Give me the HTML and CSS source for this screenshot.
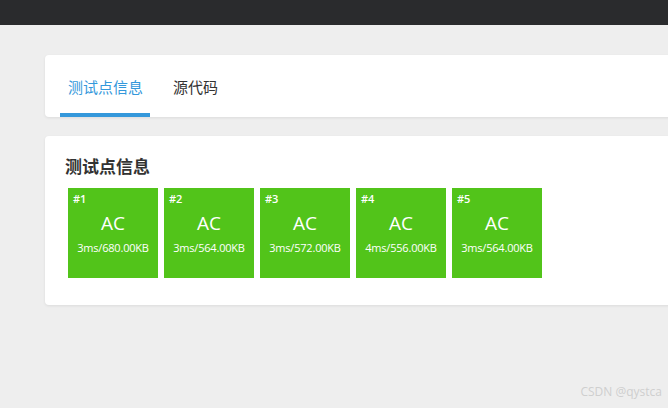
FILE: index.html
```html
<!DOCTYPE html>
<html lang="zh-CN">
<head>
<meta charset="utf-8">
<title>测试点信息</title>
<link rel="stylesheet" href="styles.css">
</head>
<body>
<header class="topbar"></header>
<main class="main">
  <section class="card tabs-card">
    <nav class="tabs">
      <a class="tab active">测试点信息</a>
      <a class="tab">源代码</a>
    </nav>
  </section>
  <section class="card cases-card">
    <h2 class="title">测试点信息</h2>
    <div class="cases">
      <div class="case"><div class="num">#1</div><div class="status">AC</div><div class="stat">3ms/680.00KB</div></div>
      <div class="case"><div class="num">#2</div><div class="status">AC</div><div class="stat">3ms/564.00KB</div></div>
      <div class="case"><div class="num">#3</div><div class="status">AC</div><div class="stat">3ms/572.00KB</div></div>
      <div class="case"><div class="num">#4</div><div class="status">AC</div><div class="stat">4ms/556.00KB</div></div>
      <div class="case"><div class="num">#5</div><div class="status">AC</div><div class="stat">3ms/564.00KB</div></div>
    </div>
  </section>
</main>
<div class="watermark">CSDN @qystca</div>
</body>
</html>
```

FILE: styles.css
```css
html, body {
  margin: 0;
  padding: 0;
}
body {
  background: #eeeeee;
  font-family: "Open Sans", "Noto Sans CJK SC", sans-serif;
  color: #333;
  width: 668px;
  height: 408px;
  overflow: hidden;
  position: relative;
}
.topbar {
  height: 25px;
  background: #2a2b2d;
}
.main {
  padding: 30px 0 0 45px;
  display: flex;
  flex-direction: column;
  gap: 19px;
}
.card {
  background: #fff;
  border-radius: 4px;
  box-shadow: 0 1px 3px rgba(0, 0, 0, 0.08);
  margin-right: -20px;
}
.tabs-card {
  height: 62px;
}
.tabs {
  display: flex;
  gap: 15px;
  padding-left: 15px;
  height: 62px;
}
.tab {
  padding: 22px 7px 16px 8px;
  font-family: "Noto Sans CJK SC", sans-serif;
  font-size: 15px;
  line-height: 20px;
  color: #333;
  white-space: nowrap;
  border-bottom: 4px solid transparent;
  box-sizing: border-box;
  height: 62px;
}
.tab.active {
  color: #3498db;
  border-bottom-color: #3498db;
}
.cases-card {
  height: 169px;
  padding: 18px 20px 0 20px;
  box-sizing: border-box;
}
.title {
  margin: 0;
  font-family: "Noto Sans CJK SC", sans-serif;
  font-size: 17px;
  line-height: 24px;
  font-weight: bold;
  color: #333;
}
.cases {
  display: flex;
  gap: 6px;
  margin-top: 10px;
  padding-left: 3px;
}
.case {
  width: 90px;
  height: 90px;
  background: #52c41a;
  color: #fff;
  box-sizing: border-box;
  padding: 4px 5px;
  display: flex;
  flex-direction: column;
}
.num {
  font-size: 11px;
  line-height: 14px;
  font-weight: 600;
}
.status {
  font-size: 19px;
  line-height: 26px;
  margin-top: 4px;
  text-align: center;
}
.stat {
  font-size: 11px;
  line-height: 15px;
  margin-top: 4px;
  text-align: center;
  letter-spacing: -0.2px;
}
.watermark {
  position: absolute;
  right: 6px;
  bottom: 8px;
  font-family: "Open Sans", sans-serif;
  font-size: 12px;
  color: #cfcfcf;
}
```
